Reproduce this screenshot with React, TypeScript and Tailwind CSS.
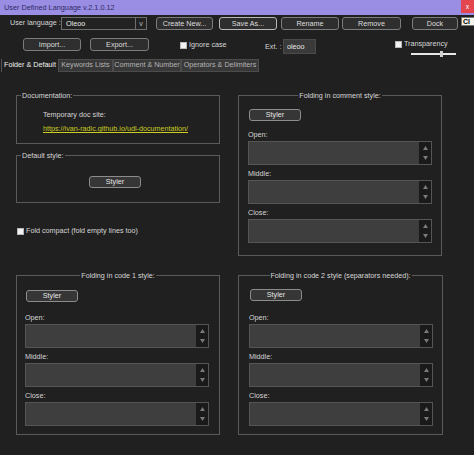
import React from "react";

type BtnProps = { children: React.ReactNode; className?: string };

function Btn({ children, className = "" }: BtnProps) {
    return (
        <div
            className={`flex h-[13px] items-center justify-center rounded-[3px] border bg-[#2e2e2e] leading-none text-[#dedede] ${className}`}
        >
            {children}
        </div>
    );
}

function Check() {
    return <span className="block h-[7px] w-[7px] shrink-0 border border-[#b8b8b8] bg-[#f2f2f2]" />;
}

type GroupProps = {
    title: string;
    center?: boolean;
    className?: string;
    children?: React.ReactNode;
};

function Group({ title, center, className = "", children }: GroupProps) {
    return (
        <div className={`relative border border-[#5a5a5a] ${className}`}>
            <span
                className={`absolute top-[-5px] whitespace-nowrap bg-[#202020] px-[1px] leading-[9px] ${
                    center ? "left-1/2 -translate-x-1/2" : "left-[4px]"
                }`}
            >
                {title}
            </span>
            {children}
        </div>
    );
}

function Styler({ className = "" }: { className?: string }) {
    return (
        <div
            className={`flex h-[12px] w-[52px] items-center justify-center rounded-[3px] border border-[#8c8c8c] bg-[#363636] leading-none text-[#e6e6e6] ${className}`}
        >
            Styler
        </div>
    );
}

function Field({ label, top }: { label: string; top: string }) {
    return (
        <>
            <div className={`mb-[1px] h-[10px] leading-[10px] ${top}`}>{label}</div>
            <div className="flex h-[24px] w-[184px] border border-[#555555] bg-[#3e3e3e]">
                <div className="flex-1" />
                <div className="flex w-[12px] flex-col items-center justify-between bg-[#1a1a1a] py-[4px]">
                    <svg width="5" height="4" viewBox="0 0 5 4">
                        <path d="M0 4 L2.5 0 L5 4Z" fill="#7a7a7a" />
                    </svg>
                    <svg width="5" height="4" viewBox="0 0 5 4">
                        <path d="M0 0 L2.5 4 L5 0Z" fill="#7a7a7a" />
                    </svg>
                </div>
            </div>
        </>
    );
}

function FoldBox({ first }: { first: string }) {
    return (
        <>
            <Field label="Open:" top={first} />
            <Field label="Middle:" top="mt-[4px]" />
            <Field label="Close:" top="mt-[4px]" />
        </>
    );
}

export default function App() {
    return (
        <div className="relative h-[455px] w-[474px] overflow-hidden bg-[#202020] font-['Liberation_Sans',Arial,sans-serif] text-[7.2px] text-[#d6d6d6]">
            {/* title bar */}
            <div className="flex h-[15px] items-start justify-between bg-[#9a8ee4]">
                <span className="pl-[4px] pt-[2px] text-[7.3px] leading-[11px] text-[#2f2a66]">
                    User Defined Language v.2.1.0.12
                </span>
                <span className="flex h-[13px] w-[13px] items-center justify-center bg-[#e3464f] text-[7px] leading-none text-white">
                    x
                </span>
            </div>
            <div className="absolute left-[461px] top-[17px] h-[9px] w-[13px] border border-r-0 border-[#777777] bg-[#f4f4ea] pl-[1px] text-[7px] font-bold leading-[7px] text-black">
                Cl
            </div>

            {/* row 1 */}
            <div className="mt-[2px] flex h-[13px] items-center">
                <span className="ml-[10px] w-[50px] whitespace-nowrap">User language :</span>
                <div className="ml-[1px] flex h-[13px] w-[86px] border border-[#6e6e6e] bg-[#222222]">
                    <span className="flex-1 pl-[4px] leading-[11px] text-[#ececec]">Oleoo</span>
                    <span className="flex w-[11px] items-center justify-center border-l border-[#6e6e6e] leading-none text-[#bbbbbb]">
                        v
                    </span>
                </div>
                <Btn className="ml-[9px] w-[57px] border-[#7c7c7c]">Create New...</Btn>
                <Btn className="ml-[6px] w-[58px] border-[#b8b8b8]">Save As...</Btn>
                <Btn className="ml-[4px] w-[58px] border-[#7c7c7c]">Rename</Btn>
                <Btn className="ml-[3px] w-[59px] border-[#7c7c7c]">Remove</Btn>
                <Btn className="ml-[11px] w-[46px] border-[#7c7c7c]">Dock</Btn>
            </div>

            {/* row 2 */}
            <div className="mt-[8px] flex h-[20px] items-start">
                <Btn className="ml-[23px] w-[58px] border-[#7c7c7c]">Import...</Btn>
                <Btn className="ml-[9px] w-[59px] border-[#7c7c7c]">Export...</Btn>
                <div className="ml-[31px] mt-[4px] flex h-[7px] w-[85px] items-center">
                    <Check />
                    <span className="ml-[2px] whitespace-nowrap">Ignore case</span>
                </div>
                <span className="mt-[4px] w-[18px] whitespace-nowrap leading-[9px]">Ext. :</span>
                <div className="mt-[1px] h-[15px] w-[33px] border border-[#4a4a4a] bg-[#3a3a3a] pl-[3px] leading-[13px] text-[#e6e6e6]">
                    oleoo
                </div>
                <div className="ml-[79px] mt-[2px] flex flex-col">
                    <div className="flex h-[8px] items-center">
                        <Check />
                        <span className="ml-[2px] whitespace-nowrap">Transparency</span>
                    </div>
                    <div className="relative ml-[16px] mt-[3px] h-[6px] w-[45px]">
                        <div className="absolute left-0 right-0 top-[2px] h-[2px] bg-[#e8e8e8]" />
                        <div className="absolute left-[29px] top-0 h-[6px] w-[3px] bg-[#cfcfcf]" />
                    </div>
                </div>
            </div>

            {/* tabs */}
            <div className="ml-[1px] mt-[1px] flex h-[13px]">
                <div className="flex w-[57px] items-center justify-center border-l border-[#555555] whitespace-nowrap text-[#f2f2f2]">
                    Folder &amp; Default
                </div>
                <div className="flex w-[55px] items-center justify-center border border-[#4c4c4c] bg-[#383838] whitespace-nowrap text-[#b4b4b4]">
                    Keywords Lists
                </div>
                <div className="flex w-[68px] items-center justify-center border border-[#4c4c4c] bg-[#383838] whitespace-nowrap text-[#b4b4b4]">
                    Comment &amp; Number
                </div>
                <div className="flex w-[78px] items-center justify-center border border-[#4c4c4c] bg-[#383838] whitespace-nowrap text-[#b4b4b4]">
                    Operators &amp; Delimiters
                </div>
            </div>

            {/* top section */}
            <div className="mt-[23px] flex items-start">
                <div className="ml-[16px] flex w-[204px] flex-col">
                    <Group title="Documentation:" className="h-[49px] pl-[26px] pt-[14px]">
                        <div className="leading-[9px]">Temporary doc site:</div>
                        <div className="mt-[5px] whitespace-nowrap leading-[9px] text-[#cccc22] underline">
                            https://ivan-radic.github.io/udl-documentation/
                        </div>
                    </Group>
                    <Group title="Default style:" className="mt-[11px] h-[48px] pl-[72px] pt-[20px]">
                        <Styler />
                    </Group>
                    <div className="ml-[1px] mt-[25px] flex h-[7px] items-center">
                        <Check />
                        <span className="ml-[2px] whitespace-nowrap">Fold compact (fold empty lines too)</span>
                    </div>
                </div>
                <Group
                    title="Folding in comment style:"
                    center
                    className="ml-[18px] h-[161px] w-[204px] pl-[9px] pt-[13px]"
                >
                    <Styler className="ml-[1px]" />
                    <FoldBox first="mt-[9px]" />
                </Group>
            </div>

            {/* bottom section */}
            <div className="mt-[19px] flex items-start">
                <Group
                    title="Folding in code 1 style:"
                    center
                    className="ml-[16px] h-[160px] w-[204px] pl-[8px] pt-[14px]"
                >
                    <Styler className="ml-[1px]" />
                    <FoldBox first="mt-[11px]" />
                </Group>
                <Group
                    title="Folding in code 2 style (separators needed):"
                    center
                    className="ml-[18px] h-[160px] w-[205px] pl-[10px] pt-[13px]"
                >
                    <Styler className="ml-[1px]" />
                    <FoldBox first="mt-[12px]" />
                </Group>
            </div>
        </div>
    );
}
